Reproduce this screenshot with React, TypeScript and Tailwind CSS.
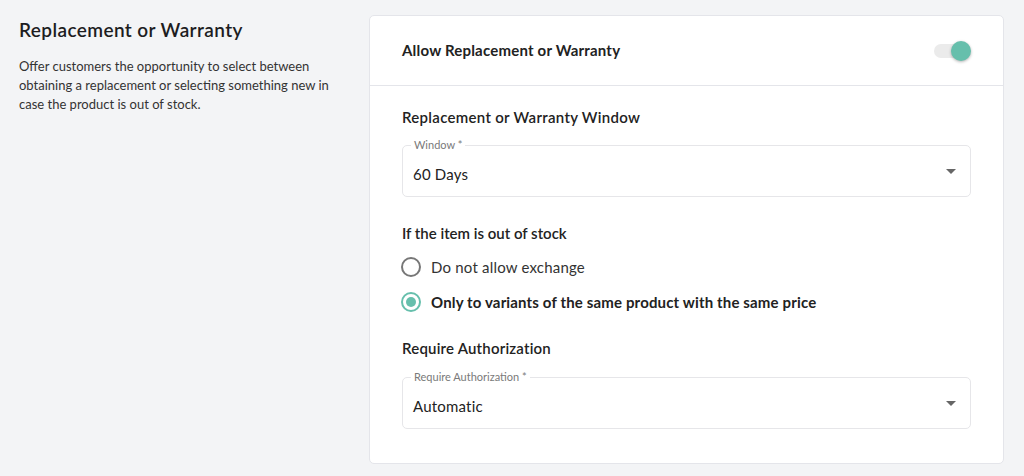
import React from "react";

function Select({ label, value }: { label: string; value: string }) {
  return (
    <div className="relative h-[52px] rounded-[5px] border border-[#e6e6e9] flex items-center pl-[10px] pr-[14px]">
      <span className="absolute -top-[8px] left-[8px] bg-white px-[3px] text-[11px] leading-[14px] text-[#7a7a7a]">
        {label} *
      </span>
      <span className="flex-1 pt-[7px] text-[15px] text-[#222] tracking-[0.2px]">{value}</span>
      <svg width="10" height="5" viewBox="0 0 10 5">
        <path d="M0 0 L10 0 L5 5 Z" fill="#666" />
      </svg>
    </div>
  );
}

function Radio({ checked, label }: { checked: boolean; label: string }) {
  return (
    <div className="flex items-center h-[24px]">
      <div
        className={
          checked
            ? "w-[20px] h-[20px] rounded-full border-2 border-[#66bfac] flex items-center justify-center -ml-[1px]"
            : "w-[20px] h-[20px] rounded-full border-2 border-[#777] -ml-[1px]"
        }
      >
        {checked && <div className="w-[10px] h-[10px] rounded-full bg-[#66bfac]" />}
      </div>
      <span
        className={
          checked
            ? "ml-[10px] text-[15px] font-bold text-[#222] tracking-[0.15px]"
            : "ml-[10px] text-[15px] text-[#333] tracking-[0.2px]"
        }
      >
        {label}
      </span>
    </div>
  );
}

export default function App() {
  return (
    <div
      className="w-[1024px] h-[476px] bg-[#f3f4f6] flex pt-[15px] pl-[19px] overflow-hidden"
      style={{ fontFamily: "Lato, 'Noto Sans', sans-serif" }}
    >
      <div className="w-[350px] shrink-0 pt-[3px]">
        <h1 className="text-[19px] leading-[24px] font-semibold text-[#1d1d1f] tracking-[0.4px]">
          Replacement or Warranty
        </h1>
        <p className="mt-[15px] w-[332px] text-[13px] leading-[19px] text-[#333]">
          Offer customers the opportunity to select between obtaining a replacement or selecting something new in case the product is out of stock.
        </p>
      </div>
      <div className="w-[635px] h-[449px] shrink-0 bg-white border border-[#e4e5ea] rounded-[5px] flex flex-col">
        <div className="h-[70px] border-b border-[#e4e5ea] flex items-center justify-between pl-[32px] pr-[32px]">
          <span className="text-[15px] font-bold text-[#222] tracking-[0.2px]">Allow Replacement or Warranty</span>
          <div className="relative w-[37px] h-[20px] flex items-center">
            <div className="w-[34px] h-[14px] rounded-full bg-[#ebebeb]" />
            <div className="absolute right-[0px] top-0 w-[20px] h-[20px] rounded-full bg-[#66bfac] shadow-[0_1px_3px_rgba(0,0,0,0.3)]" />
          </div>
        </div>
        <div className="flex flex-col px-[32px] pt-[21px]">
          <span className="text-[15px] leading-[20px] font-semibold text-[#222] tracking-[0.3px]">
            Replacement or Warranty Window
          </span>
          <div className="mt-[18px]">
            <Select label="Window" value="60 Days" />
          </div>
          <span className="mt-[26px] text-[15px] leading-[20px] font-semibold text-[#222]">
            If the item is out of stock
          </span>
          <div className="mt-[12px] flex flex-col gap-[11px]">
            <Radio checked={false} label="Do not allow exchange" />
            <Radio checked={true} label="Only to variants of the same product with the same price" />
          </div>
          <span className="mt-[24px] text-[15px] leading-[20px] font-semibold text-[#222] tracking-[0.2px]">
            Require Authorization
          </span>
          <div className="mt-[19px]">
            <Select label="Require Authorization" value="Automatic" />
          </div>
        </div>
      </div>
    </div>
  );
}
